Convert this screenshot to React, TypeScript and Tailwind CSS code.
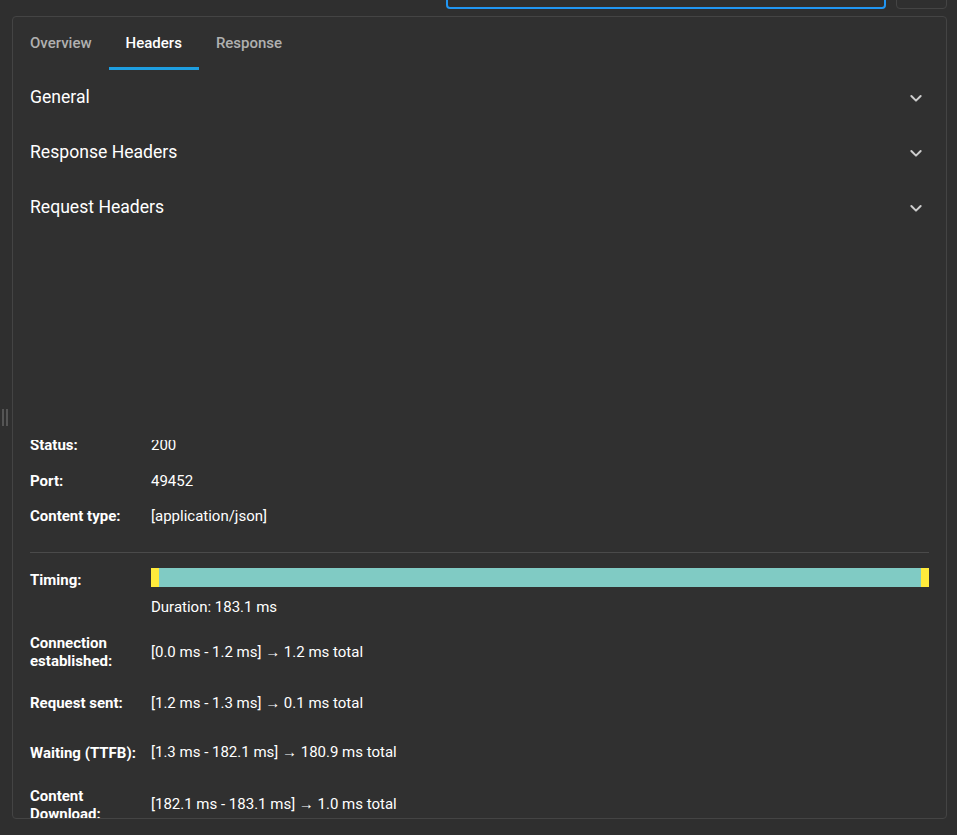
export default function App() {
  const font = { fontFamily: "Roboto, 'Noto Sans', sans-serif" };
  const rows = [
    { label: "Connection established:", value: "[0.0 ms - 1.2 ms] → 1.2 ms total", h: "h-[53px]" },
    { label: "Request sent:", value: "[1.2 ms - 1.3 ms] → 0.1 ms total", h: "h-[49px]" },
    { label: "Waiting (TTFB):", value: "[1.3 ms - 182.1 ms] → 180.9 ms total", h: "h-[50px]" },
    { label: "Content Download:", value: "[182.1 ms - 183.1 ms] → 1.0 ms total", h: "h-[54px]" },
  ];
  return (
    <div className="relative h-[835px] w-[957px] overflow-hidden bg-[#2f2f2f] text-white" style={font}>
      <div className="absolute left-[446px] top-[-10px] h-[19px] w-[440px] rounded border-2 border-[#2196f3]" />
      <div className="absolute left-[896px] top-[-10px] h-[19px] w-[51px] rounded border border-[#444]" />
      <div className="absolute left-[2px] top-[409px] flex gap-[2px]">
        <div className="h-[17px] w-[2px] bg-[#555]" />
        <div className="h-[17px] w-[2px] bg-[#555]" />
      </div>
      <div className="ml-[12px] mt-[16px] flex h-[803px] w-[935px] flex-col overflow-hidden rounded border border-[#444] bg-[#303030]">
        <div className="flex h-[53px] text-[15px] font-medium">
          <div className="flex items-center px-[17px] text-[#b0b0b0]">Overview</div>
          <div className="flex items-center border-b-[3px] border-[#1e9ee0] px-[17px] pt-[3px]">Headers</div>
          <div className="flex items-center px-[17px] text-[#b0b0b0]">Response</div>
        </div>
        {["General", "Response Headers", "Request Headers"].map((t) => (
          <div key={t} className="flex h-[55px] items-center justify-between pl-[17px] pr-[22px] text-[17.6px]">
            <span>{t}</span>
            <svg width="16" height="16" viewBox="0 0 24 24" fill="none" stroke="#ccc" strokeWidth="3" strokeLinecap="round" strokeLinejoin="round">
              <path d="M5 9l7 7 7-7" />
            </svg>
          </div>
        ))}
        <div className="h-[205px]" />
        <div className="flex-1 overflow-hidden px-[17px] text-[15px]">
          <div className="-mt-[13px] flex h-[36px] items-center">
            <span className="w-[121px] font-bold">Status:</span>
            <span>200</span>
          </div>
          <div className="flex h-[36px] items-center">
            <span className="w-[121px] font-bold">Port:</span>
            <span>49452</span>
          </div>
          <div className="flex h-[35px] items-center">
            <span className="w-[121px] font-bold">Content type:</span>
            <span>[application/json]</span>
          </div>
          <div className="mt-[18px] border-t border-[#4a4a4a]" />
          <div className="mt-[15px] flex">
            <span className="w-[121px] pt-[1px] font-bold">Timing:</span>
            <div className="flex-1">
              <div className="flex h-[19px]">
                <div className="w-[8px] bg-[#ffeb3b]" />
                <div className="flex-1 bg-[#80cbc4]" />
                <div className="w-[8px] bg-[#ffeb3b]" />
              </div>
              <div className="mt-[9px]">Duration: 183.1 ms</div>
            </div>
          </div>
          <div className="mt-[7px]">
            {rows.map((r) => (
              <div key={r.label} className={`flex items-center ${r.h}`}>
                <span className="w-[121px] pr-[8px] font-bold leading-[18px]">{r.label}</span>
                <span>{r.value}</span>
              </div>
            ))}
          </div>
        </div>
      </div>
    </div>
  );
}
